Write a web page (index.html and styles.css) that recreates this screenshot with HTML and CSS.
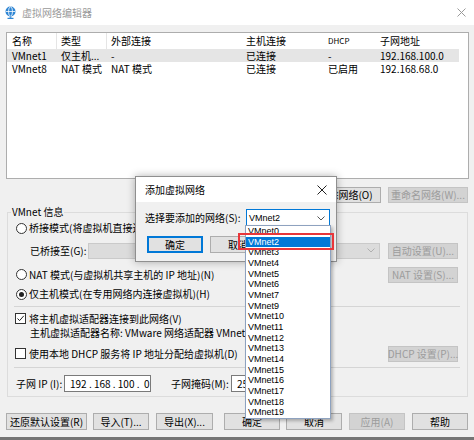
FILE: index.html
```html
<!DOCTYPE html>
<html lang="zh-CN">
<head>
<meta charset="utf-8">
<link rel="stylesheet" href="styles.css">
</head>
<body>
<div class="window">
  <div class="titlebar">
    <svg class="app-icon" viewBox="0 0 11 13" width="11" height="13">
      <circle cx="5.5" cy="5.5" r="5" fill="#2f86d4"/>
      <ellipse cx="5.5" cy="5.5" rx="2" ry="4.6" fill="none" stroke="#fff" stroke-width="0.8"/>
      <line x1="0.8" y1="5.5" x2="10.2" y2="5.5" stroke="#fff" stroke-width="0.8"/>
      <rect x="4.6" y="10.4" width="1.8" height="1.4" fill="#2f86d4"/>
      <rect x="2.5" y="11.8" width="6" height="1.2" fill="#2f86d4"/>
    </svg>
    <span class="title">虚拟网络编辑器</span>
    <svg class="tb-close" viewBox="0 0 9 9" width="9" height="9">
      <path d="M0.5 0.5 L8.5 8.5 M8.5 0.5 L0.5 8.5" stroke="#9a9a9a" stroke-width="1" fill="none"/>
    </svg>
  </div>

  <div class="main">
    <div class="list">
      <div class="lrow head">
        <div class="c c1">名称</div>
        <div class="c c2">类型</div>
        <div class="c">外部连接</div>
        <div class="c">主机连接</div>
        <div class="c small">DHCP</div>
        <div class="c">子网地址</div>
      </div>
      <div class="lrow sel">
        <div class="c c1">VMnet1</div>
        <div class="c">仅主机...</div>
        <div class="c">-</div>
        <div class="c">已连接</div>
        <div class="c">-</div>
        <div class="c">192.168.100.0</div>
      </div>
      <div class="lrow">
        <div class="c c1">VMnet8</div>
        <div class="c">NAT 模式</div>
        <div class="c">NAT 模式</div>
        <div class="c">已连接</div>
        <div class="c">已启用</div>
        <div class="c">192.168.68.0</div>
      </div>
    </div>

    <div class="list-btns">
      <div class="btn w71">添加网络(E)...</div>
      <div class="btn w71">移除网络(O)</div>
      <div class="btn dis w80">重命名网络(W)...</div>
    </div>

    <fieldset class="group">
      <legend>VMnet 信息</legend>
      <div class="row r1"><span class="radio"></span>桥接模式(将虚拟机直接连接到外部网络)(B)</div>
      <div class="row r2">
        <span class="lbl-bridge">已桥接至(G):</span>
        <div class="combo dis">
          <svg class="chev" viewBox="0 0 8 5" width="8" height="5"><path d="M0.5 0.5 L4 4 L7.5 0.5" stroke="#b0b0b0" fill="none"/></svg>
        </div>
        <div class="btn dis w70 ml8">自动设置(U)...</div>
      </div>
      <div class="row r3"><span class="radio"></span>NAT 模式(与虚拟机共享主机的 IP 地址)(N)<div class="btn dis w70 push">NAT 设置(S)...</div></div>
      <div class="row r4"><span class="radio on"></span>仅主机模式(在专用网络内连接虚拟机)(H)</div>
      <div class="sep"></div>
      <div class="row r5">
        <span class="check">
          <svg viewBox="0 0 9 9" width="9" height="9"><path d="M1.5 4.5 L3.6 6.6 L7.8 1.8" stroke="#222" stroke-width="1" fill="none"/></svg>
        </span>将主机虚拟适配器连接到此网络(V)
      </div>
      <div class="row r6">主机虚拟适配器名称: VMware 网络适配器 VMnet1</div>
      <div class="row r7"><span class="check"></span>使用本地 DHCP 服务将 IP 地址分配给虚拟机(D)<div class="btn dis w70 push">DHCP 设置(P)...</div></div>
      <div class="sep sep2"></div>
      <div class="row r8">
        <span class="lbl-ip">子网 IP (I):</span>
        <div class="ip">192 . 168 . 100 .  0</div>
        <span class="lbl-mask">子网掩码(M):</span>
        <div class="ip">255 . 255 . 255 .  0</div>
      </div>
    </fieldset>

    <div class="bottom-btns">
      <div class="btn w81">还原默认设置(R)</div>
      <div class="btn w56 ml6">导入(T)...</div>
      <div class="btn w57 ml7">导出(X)...</div>
      <div class="btn w56 ml11">确定</div>
      <div class="btn w56 ml6">取消</div>
      <div class="btn dis w56 ml7">应用(A)</div>
      <div class="btn w56 ml7">帮助</div>
    </div>
  </div>
  <div class="strip"></div>

  <div class="dialog">
    <div class="dlg-title">
      <span>添加虚拟网络</span>
      <svg class="dlg-close" viewBox="0 0 10 10" width="10" height="10">
        <path d="M0.5 0.5 L9.5 9.5 M9.5 0.5 L0.5 9.5" stroke="#222" stroke-width="1" fill="none"/>
      </svg>
    </div>
    <div class="dlg-body">
      <div class="dlg-row">
        <span class="dlg-lbl">选择要添加的网络(S):</span>
        <div class="dcombo"><span class="dval">VMnet2</span>
          <svg class="dchev" viewBox="0 0 8 5" width="8" height="5"><path d="M0.5 0.5 L4 4 L7.5 0.5" stroke="#555" fill="none"/></svg>
        </div>
      </div>
      <div class="dlg-btns">
        <div class="btn def w56">确定</div>
        <div class="btn w56 ml7">取消</div>
      </div>
    </div>
  </div>

  <div class="dropdown">
    <div class="opt">VMnet0</div>
    <div class="opt sel">VMnet2</div>
    <div class="opt">VMnet3</div>
    <div class="opt">VMnet4</div>
    <div class="opt">VMnet5</div>
    <div class="opt">VMnet6</div>
    <div class="opt">VMnet7</div>
    <div class="opt">VMnet9</div>
    <div class="opt">VMnet10</div>
    <div class="opt">VMnet11</div>
    <div class="opt">VMnet12</div>
    <div class="opt">VMnet13</div>
    <div class="opt">VMnet14</div>
    <div class="opt">VMnet15</div>
    <div class="opt">VMnet16</div>
    <div class="opt">VMnet17</div>
    <div class="opt">VMnet18</div>
    <div class="opt">VMnet19</div>
  </div>

  <div class="annot"></div>
</div>
</body>
</html>
```

FILE: styles.css
```css
* { box-sizing: border-box; }
html, body { margin: 0; padding: 0; }
body {
  background: #f0f0f0;
  font-family: "Noto Sans CJK SC", "Noto Sans", sans-serif;
  font-size: 10px;
  line-height: 12px;
  color: #000;
}
.window {
  width: 474px;
  height: 440px;
  overflow: hidden;
  position: relative;
  background: #f0f0f0;
}

/* title bar */
.titlebar {
  height: 25px;
  background: #fff;
  display: flex;
  align-items: center;
  padding-left: 5px;
}
.app-icon { display: block; }
.title { margin-left: 6px; color: #9a9a9a; }
.tb-close { margin-left: auto; margin-right: 8px; display: block; }

.main { padding: 7px 5px 0 6px; }

/* list view */
.list {
  height: 147px;
  background: #fff;
  border: 1px solid #adadad;
}
.lrow {
  display: grid;
  grid-template-columns: 50px 50px 135px 82px 52px 83px;
  width: 452px;
  height: 13px;
  align-items: center;
}
.lrow.head { height: 16px; }
.lrow.head .c { height: 16px; line-height: 16px; }
.c { padding-left: 4px; white-space: nowrap; line-height: 13px; }
.c1 { padding-left: 5px; }
.head .c1, .head .c2 { border-right: 1px solid #e5e5e5; }
.small { font-size: 8px; }
.lrow.sel { background: #e5e5e5; }

/* buttons */
.btn {
  height: 16px;
  border: 1px solid #adadad;
  background: #e1e1e1;
  display: flex;
  align-items: center;
  justify-content: center;
  white-space: nowrap;
  flex: none;
}
.btn.dis { background: #d3d3d3; border-color: #c4c4c4; color: #9c9c9c; }
.btn.def { border-color: #0078d7; box-shadow: inset 0 0 0 1px #0078d7; }
.w56 { width: 56px; }
.w57 { width: 57px; }
.w70 { width: 70px; }
.w71 { width: 71px; }
.w80 { width: 80px; }
.w81 { width: 81px; }
.ml6 { margin-left: 6px; }
.ml7 { margin-left: 7px; }
.ml8 { margin-left: 8px; }
.ml11 { margin-left: 11px; }
.push { margin-left: auto; }

.list-btns {
  display: flex;
  justify-content: flex-end;
  gap: 7px;
  margin-top: 8px;
  padding-right: 1px;
}

/* group box */
.group {
  margin: 3px 1px 0;
  padding: 2px 9px 4px 8px;
  border: 1px solid #dcdcdc;
  min-width: 0;
}
.group legend {
  margin-left: -5px;
  padding: 0 1px;
  line-height: 12px;
}
.row { display: flex; align-items: center; white-space: nowrap; }
.r1 { height: 16px; }
.r2 { height: 17px; margin-top: 6px; padding-left: 14px; }
.r3 { height: 17px; margin-top: 7px; }
.r4 { height: 16px; margin-top: 3px; }
.r5 { height: 15px; }
.r6 { height: 14px; padding-left: 14px; }
.r7 { height: 17px; margin-top: 5px; }
.r8 { height: 17px; }
.sep { height: 1px; background: #d5d5d5; margin: 4px -2px 4px -2px; }
.sep2 { margin: 5px -2px 7px -2px; }

.radio {
  width: 11px;
  height: 11px;
  border: 1px solid #333;
  border-radius: 50%;
  margin-right: 2px;
  display: flex;
  align-items: center;
  justify-content: center;
  background: #fff;
  flex: none;
}
.radio.on::after {
  content: "";
  width: 5px;
  height: 5px;
  border-radius: 50%;
  background: #222;
}
.check {
  width: 11px;
  height: 11px;
  border: 1px solid #333;
  background: #fff;
  margin-left: -1px;
  margin-right: 3px;
  display: flex;
  align-items: center;
  justify-content: center;
  flex: none;
}
.check svg { display: block; }

.lbl-bridge { width: 58px; flex: none; }
.combo {
  flex: 1;
  height: 16px;
  display: flex;
  align-items: center;
  justify-content: flex-end;
  padding-right: 4px;
}
.combo.dis { background: #dcdcdc; border: 1px solid #cacaca; }
.chev { display: block; }

.lbl-ip { width: 48px; flex: none; }
.ip {
  width: 87px;
  height: 17px;
  border: 1px solid #7a7a7a;
  background: #fff;
  padding-left: 5px;
  display: flex;
  align-items: center;
  white-space: pre;
  flex: none;
}
.lbl-mask { margin-left: 20px; width: 60px; flex: none; }

.bottom-btns { display: flex; margin-top: 16px; }
.bottom-btns .btn { height: 17px; }

.strip { height: 3px; margin-top: 7px; background: #747474; }

/* add network dialog */
.dialog {
  position: absolute;
  left: 135px;
  top: 176px;
  width: 202px;
  height: 86px;
  border: 1px solid #8f8f8f;
  background: #f0f0f0;
  box-shadow: 0 0 8px rgba(0, 0, 0, 0.3);
}
.dlg-title {
  height: 25px;
  background: #fff;
  display: flex;
  align-items: center;
  padding-left: 9px;
}
.dlg-close { margin-left: auto; margin-right: 9px; display: block; }
.dlg-body { padding: 7px 6px 0 9px; }
.dlg-row { display: flex; align-items: center; height: 18px; }
.dlg-lbl { width: 101px; flex: none; }
.dcombo {
  width: 84px;
  height: 18px;
  border: 1px solid #0078d7;
  background: #fff;
  display: flex;
  align-items: center;
  padding-left: 2px;
}
.dval { font-family: "Liberation Sans", Arial, sans-serif; font-size: 9px; line-height: 11px; }
.dchev { margin-left: auto; margin-right: 4px; display: block; }
.dlg-btns { display: flex; margin-top: 9px; padding-left: 2px; }
.dlg-btns .btn { height: 17px; }

/* dropdown list */
.dropdown {
  position: absolute;
  left: 245px;
  top: 225px;
  width: 86px;
  border: 1px solid #8ea2bf;
  background: #fff;
  box-shadow: 2px 2px 3px rgba(0, 0, 0, 0.25);
  font-family: "Liberation Sans", Arial, sans-serif;
  font-size: 9px;
}
.opt {
  height: 10.67px;
  line-height: 10.67px;
  padding-left: 2px;
  white-space: nowrap;
}
.opt.sel { background: #0078d7; color: #fff; }

/* red annotation frame */
.annot {
  position: absolute;
  left: 238px;
  top: 233px;
  width: 96px;
  height: 17px;
  border: 2px solid #e8363a;
}
```
